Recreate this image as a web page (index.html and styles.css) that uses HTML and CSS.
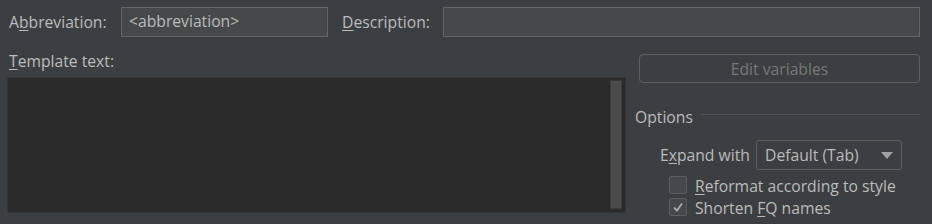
FILE: index.html
```html
<!DOCTYPE html>
<html lang="en">
<head>
    <meta charset="UTF-8">
    <title>Live Template</title>
    <link rel="stylesheet" href="styles.css">
</head>
<body>
    <div class="top-row">
        <label class="label abbr-label">A<u>b</u>breviation:</label>
        <div class="field abbr-field">&lt;abbreviation&gt;</div>
        <label class="label desc-label"><u>D</u>escription:</label>
        <div class="field desc-field"></div>
    </div>
    <div class="main">
        <div class="left">
            <div class="label template-label"><u>T</u>emplate text:</div>
            <div class="editor">
                <div class="scrollbar"></div>
            </div>
        </div>
        <div class="right">
            <div class="button">Edit variables</div>
            <div class="options-title">
                <span>Options</span>
                <div class="line"></div>
            </div>
            <div class="expand-row">
                <span class="label expand-label">E<u>x</u>pand with</span>
                <div class="combo">
                    <span>Default (Tab)</span>
                    <span class="arrow"></span>
                </div>
            </div>
            <div class="check-row">
                <span class="checkbox"></span>
                <span class="label"><u>R</u>eformat according to style</span>
            </div>
            <div class="check-row">
                <span class="checkbox">
                    <svg width="14" height="14" viewBox="0 0 14 14"><path d="M3 7.5 L6 10.5 L11 3.5" fill="none" stroke="#a9a9a9" stroke-width="1.8"/></svg>
                </span>
                <span class="label">Shorten <u>F</u>Q names</span>
            </div>
        </div>
    </div>
</body>
</html>
```

FILE: styles.css
```css
body {
    margin: 0;
    background: #3c3f41;
    color: #bbbbbb;
    font-family: "Open Sans", "Noto Sans", sans-serif;
    font-size: 15.7px;
    width: 932px;
    height: 224px;
    overflow: hidden;
}

u {
    text-decoration-thickness: 1px;
    text-underline-offset: 2px;
}

.top-row {
    display: flex;
    align-items: center;
    margin-top: 7px;
    height: 30px;
}

.abbr-label {
    margin-left: 9px;
    width: 112px;
}

.field {
    box-sizing: border-box;
    height: 30px;
    background: #45494a;
    border: 1px solid #646464;
    padding: 0 7px;
    line-height: 27px;
}

.abbr-field {
    width: 207px;
}

.desc-label {
    margin-left: 14px;
    width: 101px;
}

.desc-field {
    width: 477px;
}

.main {
    display: flex;
    margin-top: 12px;
}

.left {
    margin-left: 7px;
    width: 619px;
}

.template-label {
    margin-left: 2px;
    height: 28px;
    line-height: 25px;
}

.editor {
    box-sizing: border-box;
    height: 136px;
    background: #2b2b2b;
    border: 1px solid #333536;
    position: relative;
}

.scrollbar {
    position: absolute;
    right: 3px;
    top: 2px;
    bottom: 3px;
    width: 10px;
    background: #4c4c4c;
    border: 1px solid #3a3a3a;
}

.right {
    margin-left: 9px;
    width: 285px;
}

.button {
    box-sizing: border-box;
    margin-left: 4px;
    margin-top: 5px;
    height: 29px;
    border: 1px solid #5e6060;
    border-radius: 4px;
    color: #777777;
    text-align: center;
    line-height: 29px;
}

.options-title {
    display: flex;
    align-items: center;
    margin-top: 24px;
    height: 20px;
}

.options-title .line {
    flex: 1;
    height: 1px;
    background: #505253;
    margin-left: 8px;
    margin-top: -6px;
}

.expand-row {
    display: flex;
    align-items: center;
    margin-top: 13px;
    margin-left: 25px;
    height: 30px;
}

.expand-label {
    width: 96px;
}

.combo {
    box-sizing: border-box;
    display: flex;
    align-items: center;
    justify-content: space-between;
    width: 146px;
    height: 30px;
    border: 1px solid #5e6060;
    border-radius: 3px;
    padding: 0 8px;
}

.arrow {
    width: 0;
    height: 0;
    border-left: 6px solid transparent;
    border-right: 6px solid transparent;
    border-top: 7px solid #a0a0a0;
}

.check-row {
    display: flex;
    align-items: center;
    margin-left: 34px;
    height: 22px;
}

.check-row .label {
    padding-top: 2px;
}

.expand-row + .check-row {
    margin-top: 4px;
}

.checkbox {
    box-sizing: border-box;
    display: flex;
    align-items: center;
    justify-content: center;
    width: 18px;
    height: 18px;
    border: 1px solid #5b5d5f;
    border-radius: 2px;
    background: #43494a;
    margin-right: 8px;
}
```
